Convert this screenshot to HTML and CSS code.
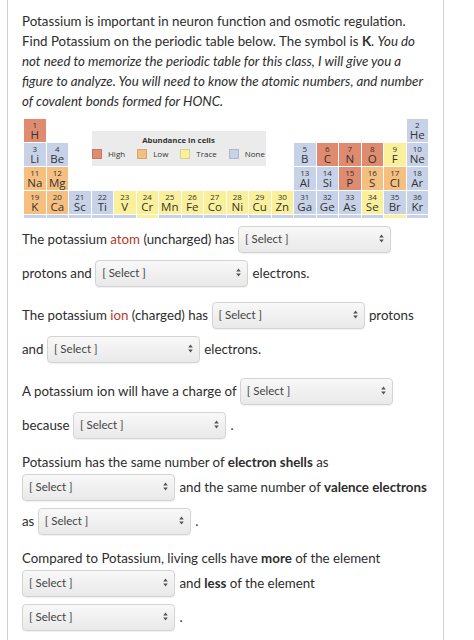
FILE: index.html
```html
<!DOCTYPE html>
<html>
<head>
<meta charset="utf-8">
<link rel="stylesheet" href="styles.css">
</head>
<body>
<div class="card">
  <p class="intro">Potassium is important in neuron function and osmotic regulation. Find Potassium on the periodic table below. The symbol is <b>K</b>. <i>You do not need to memorize the periodic table for this class, I will give you a figure to analyze. You will need to know the atomic numbers, and number of covalent bonds formed for HONC.</i></p>

  <div class="ptable">
    <div class="legend">
      <div class="lg-title">Abundance in cells</div>
      <div class="lg-items">
        <span class="sw high"></span><span class="lg-lab">High</span>
        <span class="sw low"></span><span class="lg-lab">Low</span>
        <span class="sw trace"></span><span class="lg-lab">Trace</span>
        <span class="sw none"></span><span class="lg-lab">None</span>
      </div>
    </div>
    <div class="el high"><span class="n">1</span><span class="s">H</span></div>
    <div class="el none c18"><span class="n">2</span><span class="s">He</span></div>
    <div class="el none"><span class="n">3</span><span class="s">Li</span></div>
    <div class="el none"><span class="n">4</span><span class="s">Be</span></div>
    <div class="el none c13"><span class="n">5</span><span class="s">B</span></div>
    <div class="el high"><span class="n">6</span><span class="s">C</span></div>
    <div class="el high"><span class="n">7</span><span class="s">N</span></div>
    <div class="el high"><span class="n">8</span><span class="s">O</span></div>
    <div class="el trace"><span class="n">9</span><span class="s">F</span></div>
    <div class="el none"><span class="n">10</span><span class="s">Ne</span></div>
    <div class="el low"><span class="n">11</span><span class="s">Na</span></div>
    <div class="el low"><span class="n">12</span><span class="s">Mg</span></div>
    <div class="el none c13"><span class="n">13</span><span class="s">Al</span></div>
    <div class="el none"><span class="n">14</span><span class="s">Si</span></div>
    <div class="el high"><span class="n">15</span><span class="s">P</span></div>
    <div class="el low"><span class="n">16</span><span class="s">S</span></div>
    <div class="el low"><span class="n">17</span><span class="s">Cl</span></div>
    <div class="el none"><span class="n">18</span><span class="s">Ar</span></div>
    <div class="el low"><span class="n">19</span><span class="s">K</span></div>
    <div class="el low"><span class="n">20</span><span class="s">Ca</span></div>
    <div class="el none"><span class="n">21</span><span class="s">Sc</span></div>
    <div class="el none"><span class="n">22</span><span class="s">Ti</span></div>
    <div class="el trace"><span class="n">23</span><span class="s">V</span></div>
    <div class="el trace"><span class="n">24</span><span class="s">Cr</span></div>
    <div class="el trace"><span class="n">25</span><span class="s">Mn</span></div>
    <div class="el trace"><span class="n">26</span><span class="s">Fe</span></div>
    <div class="el trace"><span class="n">27</span><span class="s">Co</span></div>
    <div class="el trace"><span class="n">28</span><span class="s">Ni</span></div>
    <div class="el trace"><span class="n">29</span><span class="s">Cu</span></div>
    <div class="el trace"><span class="n">30</span><span class="s">Zn</span></div>
    <div class="el none"><span class="n">31</span><span class="s">Ga</span></div>
    <div class="el none"><span class="n">32</span><span class="s">Ge</span></div>
    <div class="el none"><span class="n">33</span><span class="s">As</span></div>
    <div class="el trace"><span class="n">34</span><span class="s">Se</span></div>
    <div class="el none"><span class="n">35</span><span class="s">Br</span></div>
    <div class="el none"><span class="n">36</span><span class="s">Kr</span></div>
    <div class="el none"></div><div class="el none"></div><div class="el none"></div><div class="el none"></div><div class="el none"></div><div class="el trace"></div>
    <div class="el none"></div><div class="el none"></div><div class="el none"></div><div class="el none"></div><div class="el none"></div><div class="el none"></div>
    <div class="el none"></div><div class="el none"></div><div class="el none"></div><div class="el none"></div><div class="el trace"></div><div class="el none"></div>
  </div>

  <p class="q">The potassium <span class="red">atom</span> (uncharged) has <span class="sel"><span class="sel-t">[ Select ]</span><svg class="arr" width="5" height="9" viewBox="0 0 5 9"><path d="M2.5 0.5 L4.8 3.5 H0.2 Z M2.5 8.5 L4.8 5.5 H0.2 Z" fill="#555"/></svg></span> protons and <span class="sel"><span class="sel-t">[ Select ]</span><svg class="arr" width="5" height="9" viewBox="0 0 5 9"><path d="M2.5 0.5 L4.8 3.5 H0.2 Z M2.5 8.5 L4.8 5.5 H0.2 Z" fill="#555"/></svg></span> electrons.</p>

  <p class="q">The potassium <span class="red">ion</span> (charged) has <span class="sel"><span class="sel-t">[ Select ]</span><svg class="arr" width="5" height="9" viewBox="0 0 5 9"><path d="M2.5 0.5 L4.8 3.5 H0.2 Z M2.5 8.5 L4.8 5.5 H0.2 Z" fill="#555"/></svg></span> protons and <span class="sel"><span class="sel-t">[ Select ]</span><svg class="arr" width="5" height="9" viewBox="0 0 5 9"><path d="M2.5 0.5 L4.8 3.5 H0.2 Z M2.5 8.5 L4.8 5.5 H0.2 Z" fill="#555"/></svg></span> electrons.</p>

  <p class="q">A potassium ion will have a charge of <span class="sel"><span class="sel-t">[ Select ]</span><svg class="arr" width="5" height="9" viewBox="0 0 5 9"><path d="M2.5 0.5 L4.8 3.5 H0.2 Z M2.5 8.5 L4.8 5.5 H0.2 Z" fill="#555"/></svg></span> because <span class="sel"><span class="sel-t">[ Select ]</span><svg class="arr" width="5" height="9" viewBox="0 0 5 9"><path d="M2.5 0.5 L4.8 3.5 H0.2 Z M2.5 8.5 L4.8 5.5 H0.2 Z" fill="#555"/></svg></span> .</p>

  <p class="q">Potassium has the same number of <b>electron shells</b> as <span class="sel"><span class="sel-t">[ Select ]</span><svg class="arr" width="5" height="9" viewBox="0 0 5 9"><path d="M2.5 0.5 L4.8 3.5 H0.2 Z M2.5 8.5 L4.8 5.5 H0.2 Z" fill="#555"/></svg></span> and the same number of <b>valence electrons</b> as <span class="sel"><span class="sel-t">[ Select ]</span><svg class="arr" width="5" height="9" viewBox="0 0 5 9"><path d="M2.5 0.5 L4.8 3.5 H0.2 Z M2.5 8.5 L4.8 5.5 H0.2 Z" fill="#555"/></svg></span> .</p>

  <p class="q">Compared to Potassium, living cells have <b>more</b> of the element <span class="sel"><span class="sel-t">[ Select ]</span><svg class="arr" width="5" height="9" viewBox="0 0 5 9"><path d="M2.5 0.5 L4.8 3.5 H0.2 Z M2.5 8.5 L4.8 5.5 H0.2 Z" fill="#555"/></svg></span> and <b>less</b> of the element <span class="sel"><span class="sel-t">[ Select ]</span><svg class="arr" width="5" height="9" viewBox="0 0 5 9"><path d="M2.5 0.5 L4.8 3.5 H0.2 Z M2.5 8.5 L4.8 5.5 H0.2 Z" fill="#555"/></svg></span> .</p>
</div>
</body>
</html>
```
FILE: styles.css
```css
html, body {
  margin: 0;
  padding: 0;
  background: #fff;
}
body {
  font-family: Lato, "Open Sans", sans-serif;
  color: #2d2d2d;
  font-size: 13.3px;
  line-height: 20px;
}
.card {
  margin-left: 7px;
  width: 437px;
  box-sizing: border-box;
  border-left: 1px solid #d2d2d2;
  border-right: 1px solid #d2d2d2;
  padding: 11px 12px 20px 14px;
  min-height: 640px;
}
p {
  margin: 0;
}
.intro {
  margin-bottom: 8px;
}
.ptable {
  display: grid;
  grid-template-columns: repeat(18, 21.5px);
  grid-template-rows: repeat(4, 23px) 3px;
  gap: 1px;
  margin-left: 2px;
  margin-bottom: 6px;
  font-family: "Open Sans", Lato, sans-serif;
  color: #333;
}
.el {
  display: flex;
  flex-direction: column;
  align-items: center;
  overflow: hidden;
}
.el .n {
  font-size: 8px;
  line-height: 8px;
  margin-top: 2px;
}
.el .s {
  font-size: 11.5px;
  line-height: 12px;
}
.c18 { grid-column-start: 18; }
.c13 { grid-column-start: 13; }
.high { background: #df8b70; }
.low { background: #f5bf80; }
.trace { background: #faf09c; }
.none { background: #c7d2e8; }

.legend {
  grid-column: 4 / 12;
  grid-row: 1 / 3;
  margin: 12px 5px 0 0;
  background: #ebebeb;
  display: flex;
  flex-direction: column;
  align-items: center;
  color: #333;
}
.lg-title {
  font-weight: 700;
  font-size: 7.8px;
  line-height: 10px;
  margin-top: 4px;
}
.lg-items {
  display: flex;
  align-items: center;
  margin-top: 4px;
  font-size: 8px;
  line-height: 10px;
}
.sw {
  width: 10px;
  height: 10px;
  box-sizing: border-box;
  border: 1px solid rgba(0,0,0,0.12);
  margin-right: 6px;
}
.lg-lab {
  margin-right: 12px;
}
.lg-lab:last-child {
  margin-right: 0;
}

.q {
  margin-bottom: 8px;
}
.red {
  color: #b5382b;
}
.sel {
  display: inline-flex;
  align-items: center;
  justify-content: space-between;
  box-sizing: border-box;
  width: 153px;
  height: 27px;
  vertical-align: middle;
  margin: 2px 1px 5px 0;
  padding: 0 6px 2px 6px;
  border: 1px solid #d3d3d3;
  border-radius: 4px;
  background: linear-gradient(#f8f8f8, #e9e9e9);
  box-shadow: 0 1px 1px rgba(0,0,0,0.06);
  font-size: 11.5px;
  color: #444;
}
.sel-t {
  line-height: 14px;
}
.arr {
  display: block;
}
```
